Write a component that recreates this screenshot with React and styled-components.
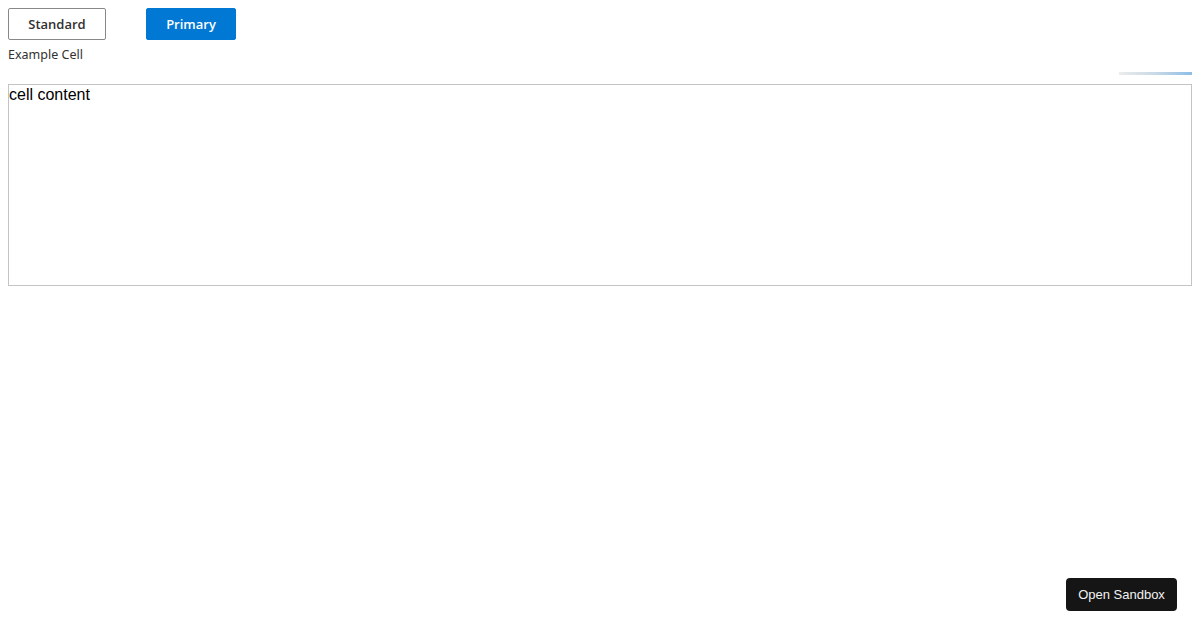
import React from 'react'
import styled, { createGlobalStyle } from 'styled-components';

const GlobalStyle = createGlobalStyle`
  body {
    margin: 8px;
    background: #ffffff;
    font-family: "Liberation Sans", Arial, sans-serif;
  }
`;

const Page = styled.div`
  display: flex;
  flex-direction: column;
`

const Toolbar = styled.div`
  display: flex;
  gap: 40px;
  align-items: center;
`

const Button = styled.button`
  box-sizing: border-box;
  height: 32px;
  min-width: 80px;
  padding: 0 16px;
  border-radius: 2px;
  font-family: "Open Sans", "Noto Sans", sans-serif;
  font-size: 13px;
  font-weight: 600;
  cursor: pointer;
  border: 1px solid ${p => p.$primary ? '#0078d4' : '#8a8886'};
  background: ${p => p.$primary ? '#0078d4' : '#ffffff'};
  color: ${p => p.$primary ? '#ffffff' : '#323130'};
  width: ${p => p.$width}px;
`

const Label = styled.div`
  font-family: "Segoe UI", "Noto Sans", sans-serif;
  font-size: 12.5px;
  color: #323130;
  line-height: 20px;
  margin-top: 5px;
`

const Track = styled.div`
  position: relative;
  height: 3px;
  margin-top: 7px;
  overflow: hidden;
`

const Bar = styled.div`
  position: absolute;
  right: 0;
  top: 0;
  height: 100%;
  width: 73px;
  background: linear-gradient(to right, #ececec 0%, #c9d9e6 50%, #8dbde6 100%);
`

const Cell = styled.div`
  margin-top: 9px;
  height: 200px;
  border: 1px solid #c4c4c4;
  font-family: "Liberation Sans", Arial, sans-serif;
  font-size: 16px;
  color: #000;
  line-height: 20px;
`

const SandboxButton = styled.button`
  position: fixed;
  right: 23px;
  bottom: 19px;
  width: 111px;
  height: 33px;
  border: none;
  border-radius: 4px;
  background: #151515;
  color: #f2f2f2;
  font-family: "Liberation Sans", Arial, sans-serif;
  font-size: 13px;
  cursor: pointer;
`

export default function App() {
  return (
    <Page>
      <GlobalStyle />
      <Toolbar>
        <Button $width={98}>Standard</Button>
        <Button $primary $width={90}>Primary</Button>
      </Toolbar>
      <Label>Example Cell</Label>
      <Track>
        <Bar />
      </Track>
      <Cell>cell content</Cell>
      <SandboxButton>Open Sandbox</SandboxButton>
    </Page>
  )
}
